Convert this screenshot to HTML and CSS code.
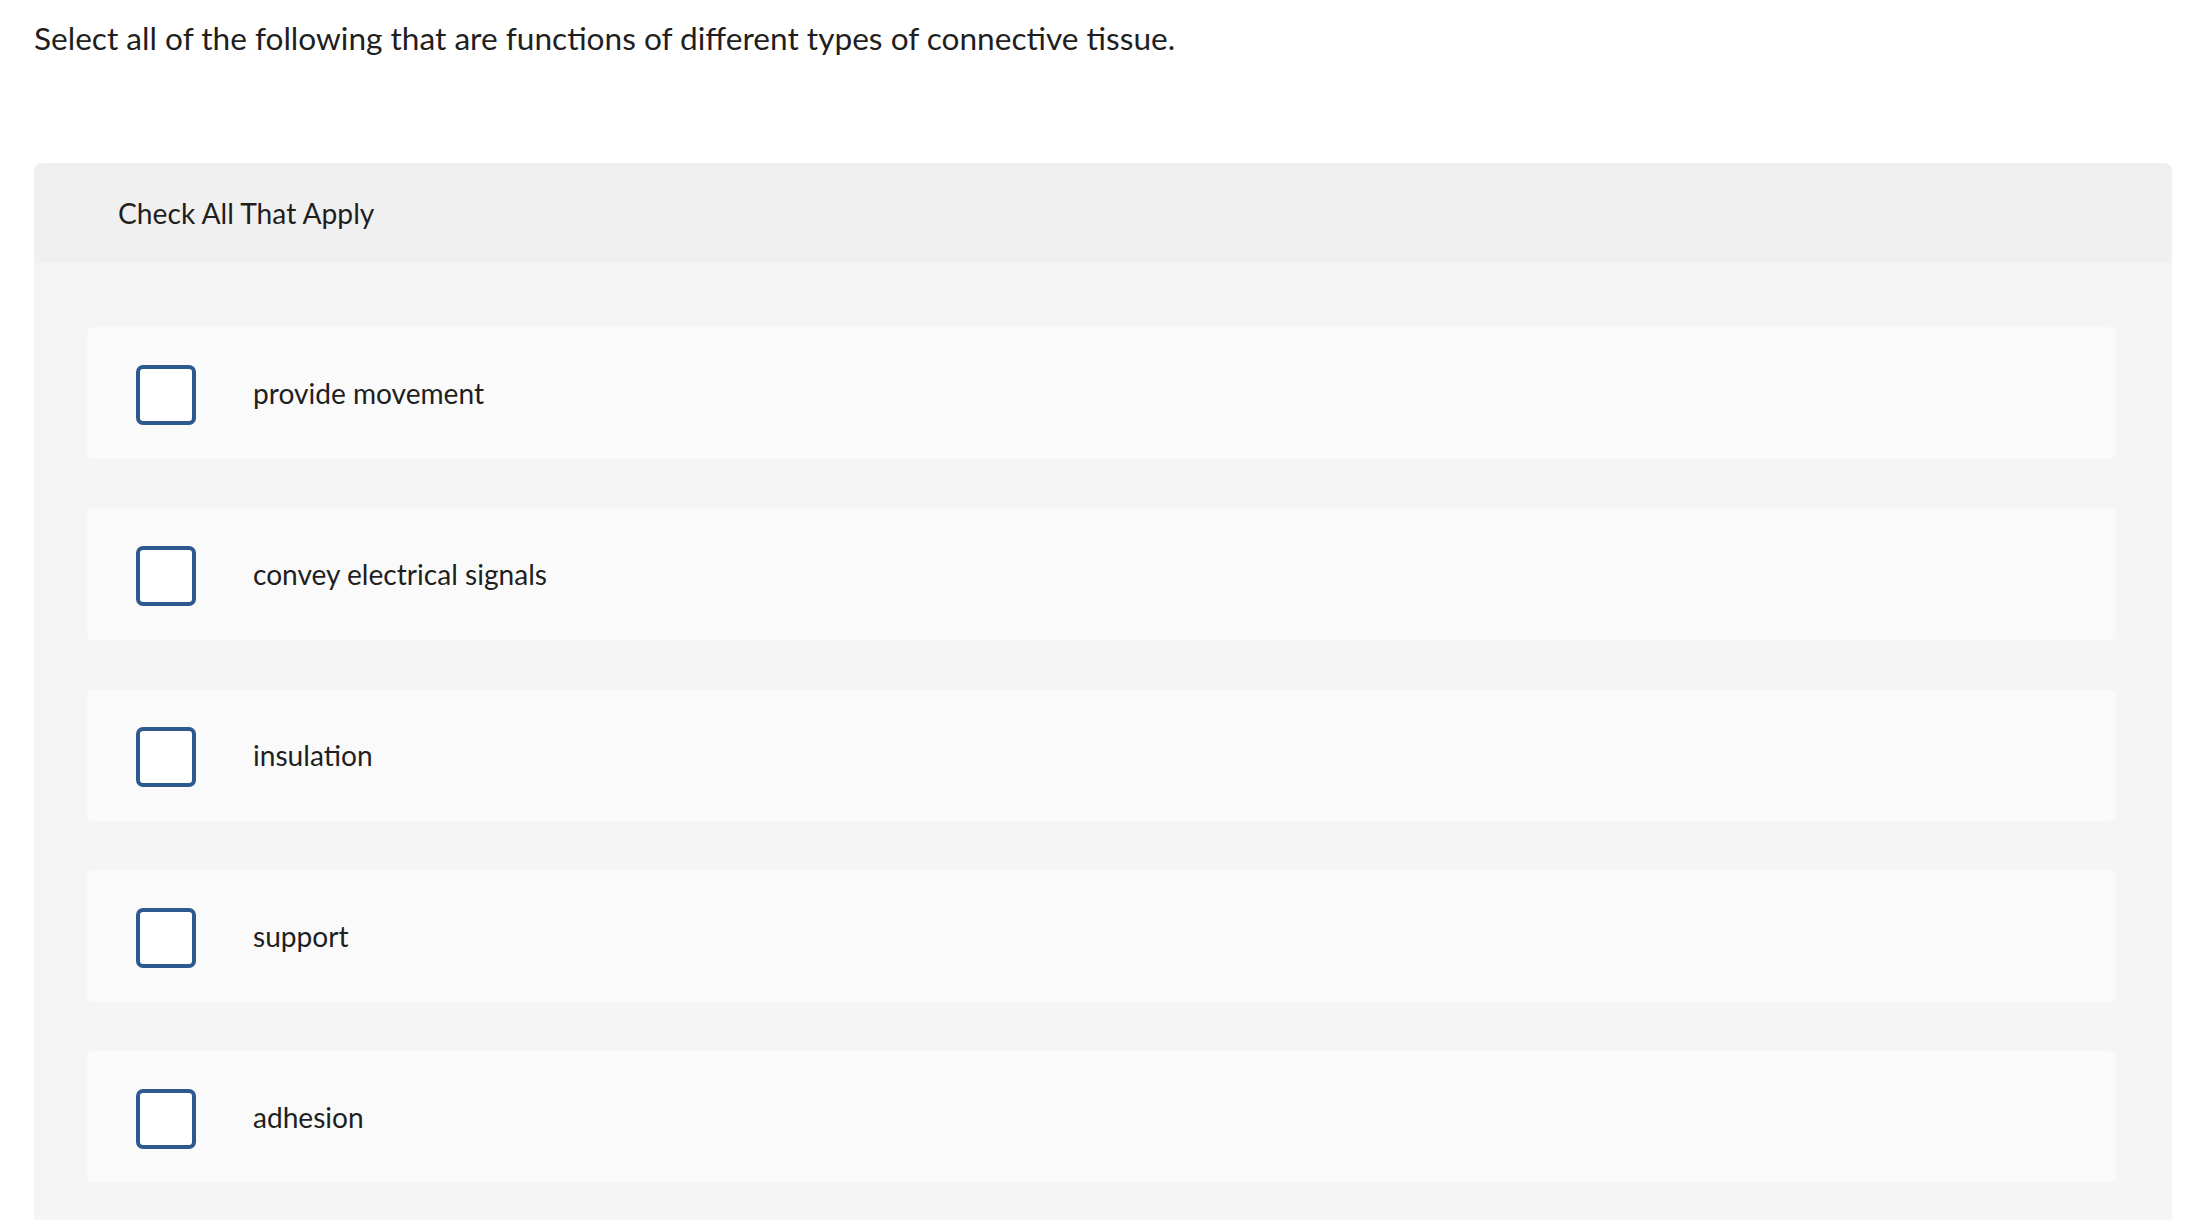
FILE: index.html
```html
<!DOCTYPE html>
<html lang="en">
<head>
<meta charset="utf-8">
<title>Check All That Apply</title>
<link rel="stylesheet" href="styles.css">
</head>
<body>
<div class="page">
  <p class="prompt">Select all of the following that are functions of different types of connective tissue.</p>
  <section class="panel">
    <div class="panel-header">Check All That Apply</div>
    <div class="panel-body">
      <label class="option"><span class="box"></span><span class="option-text">provide movement</span></label>
      <label class="option"><span class="box"></span><span class="option-text">convey electrical signals</span></label>
      <label class="option"><span class="box"></span><span class="option-text">insulation</span></label>
      <label class="option"><span class="box"></span><span class="option-text">support</span></label>
      <label class="option"><span class="box"></span><span class="option-text">adhesion</span></label>
    </div>
  </section>
</div>
</body>
</html>
```
FILE: styles.css
```css
html, body {
  margin: 0;
  padding: 0;
  background: #ffffff;
}
body {
  font-family: Lato, "Open Sans", Arial, sans-serif;
  color: #1f1f1f;
  height: 1220px;
  overflow: hidden;
}
.page {
  padding: 0 15px 0 34px;
}
.prompt {
  margin: 0;
  padding-top: 18px;
  font-size: 31.6px;
  line-height: 40px;
  height: 145px;
  color: #1f1f1f;
}
.panel {
  border-radius: 8px 8px 0 0;
  overflow: hidden;
  background: #f5f5f5;
  height: 1057px;
}
.panel-header {
  height: 100px;
  background: #f0f0f0;
  display: flex;
  align-items: center;
  padding-left: 84px;
  font-size: 28.2px;
  color: #1f1f1f;
}
.panel-body {
  padding: 64px 56px 0 53px;
  display: flex;
  flex-direction: column;
  gap: 49px;
}
.option {
  height: 132px;
  background: #fafafa;
  border-radius: 6px;
  display: flex;
  align-items: center;
  padding-left: 49px;
}
.box {
  width: 60px;
  height: 60px;
  margin-top: 4px;
  box-sizing: border-box;
  border: 4px solid #2d5a8e;
  border-radius: 7px;
  background: #ffffff;
  flex: none;
}
.option-text {
  margin-left: 57px;
  font-size: 28.1px;
  color: #1f1f1f;
}
```
